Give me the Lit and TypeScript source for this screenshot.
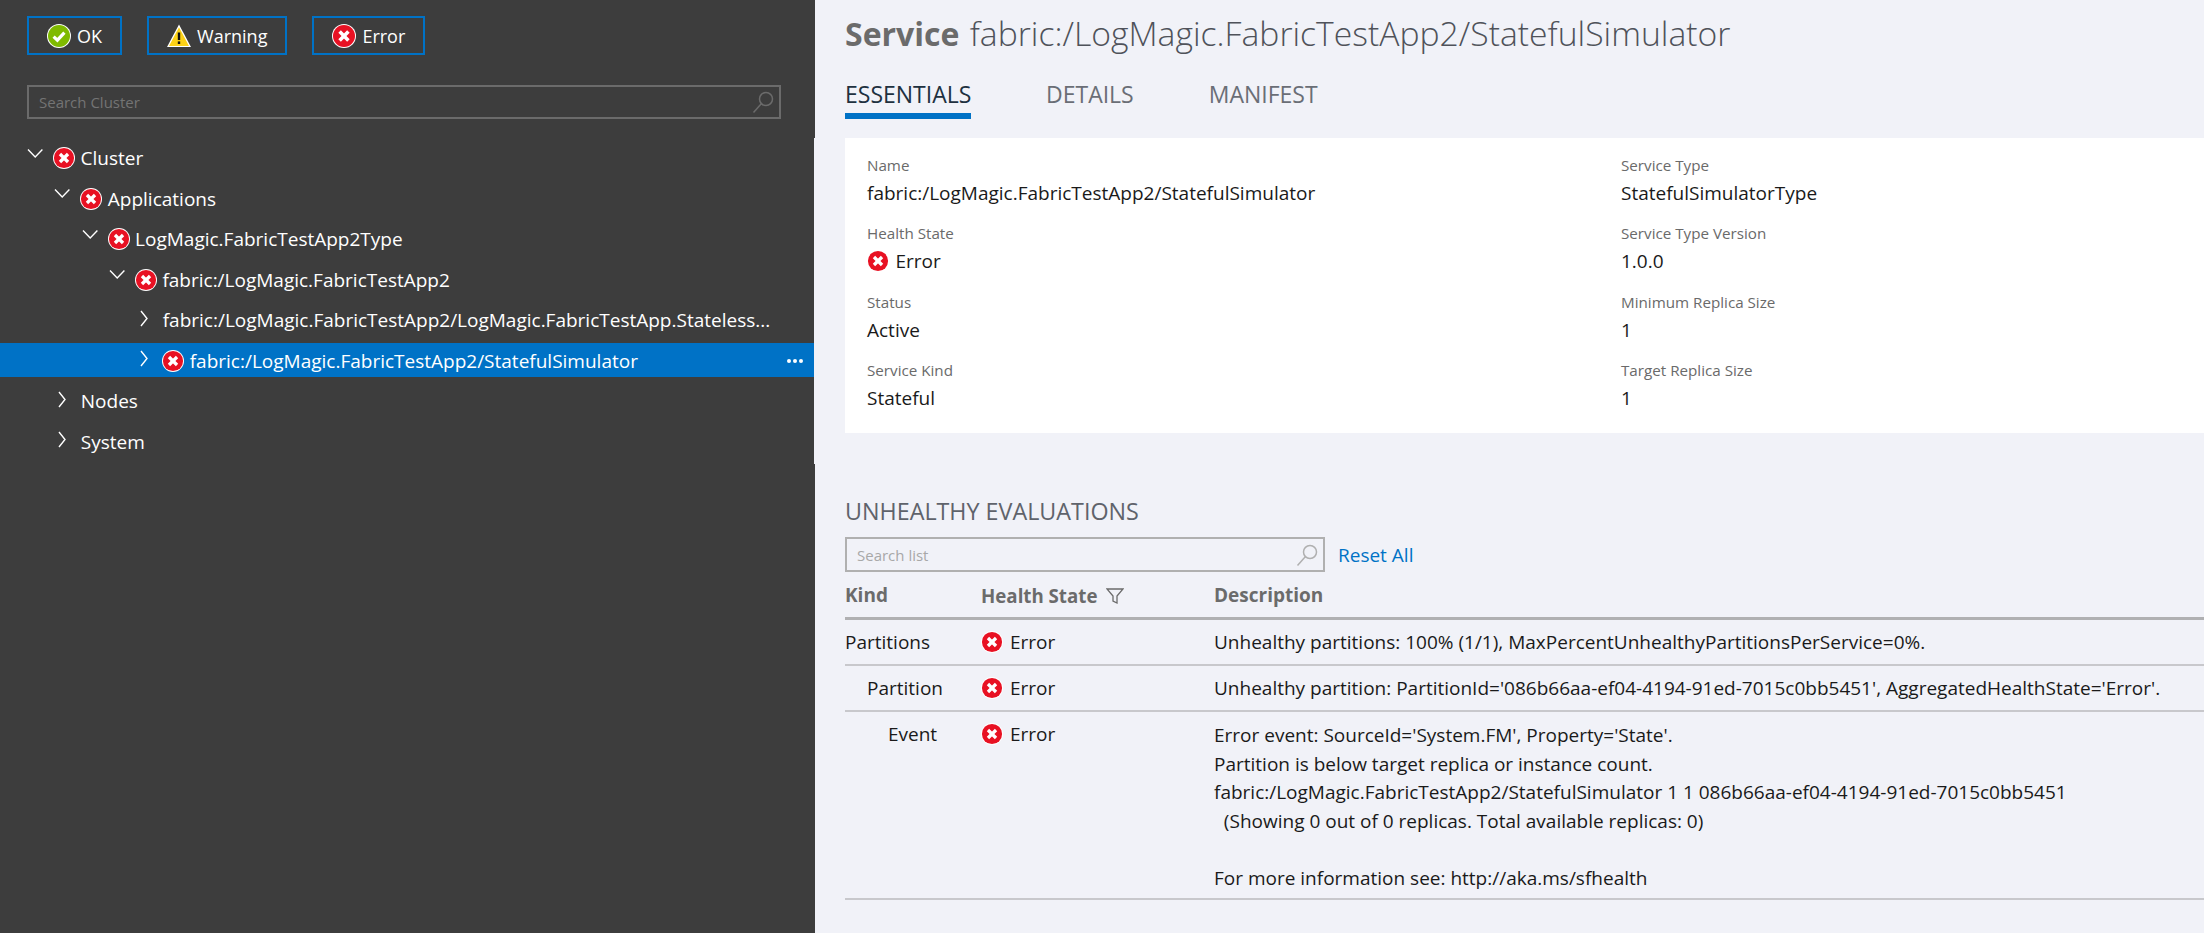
import { LitElement, html, css, svg } from "lit";
import { customElement } from "lit/decorators.js";

const errIcon = (size = 22) => html`<svg class="ico" width=${size} height=${size} viewBox="0 0 24 24">
  <circle cx="12" cy="12" r="12" fill="#fff"/><circle cx="12" cy="12" r="11" fill="#e81123"/>
  <path d="M7.6 7.6l8.8 8.8M16.4 7.6l-8.8 8.8" stroke="#fff" stroke-width="3.6" fill="none"/></svg>`;
const okIcon = html`<svg class="ico" width="24" height="24" viewBox="0 0 24 24">
  <circle cx="12" cy="12" r="12" fill="#fff"/><circle cx="12" cy="12" r="11" fill="#7fba00"/>
  <path d="M6.6 12.6l3.8 3.6 7-7.6" stroke="#fff" stroke-width="3.2" fill="none"/></svg>`;
const warnIcon = html`<svg class="ico" width="24" height="24" viewBox="0 0 24 24">
  <path d="M12 .5L24 23H0z" fill="#fff"/><path d="M12 3.2L22 22H2z" fill="#fcd116"/>
  <path d="M12 8.5v7.5" stroke="#111" stroke-width="2.4"/><path d="M12 17.4v2.6" stroke="#111" stroke-width="2.4"/></svg>`;
const searchIcon = (c: string) => html`<svg class="sicon" width="24" height="24" viewBox="0 0 24 24" fill="none" stroke=${c} stroke-width="1.5">
  <circle cx="15" cy="9" r="6.5"/><path d="M10.5 13.5L2.5 22.5"/></svg>`;
const chevDown = svg`<path d="M1 1.5l7.2 7.5 7.2-7.5" stroke="#fff" stroke-width="1.4" fill="none"/>`;
const chevRight = svg`<path d="M5 1l6 7.5-6 7.5" stroke="#fff" stroke-width="1.4" fill="none"/>`;

type Node = { d: number; open?: boolean; err?: boolean; t: string; sel?: boolean };
const tree: Node[] = [
  { d: 0, open: true, err: true, t: "Cluster" },
  { d: 1, open: true, err: true, t: "Applications" },
  { d: 2, open: true, err: true, t: "LogMagic.FabricTestApp2Type" },
  { d: 3, open: true, err: true, t: "fabric:/LogMagic.FabricTestApp2" },
  { d: 4, t: "fabric:/LogMagic.FabricTestApp2/LogMagic.FabricTestApp.Stateless..." },
  { d: 4, err: true, sel: true, t: "fabric:/LogMagic.FabricTestApp2/StatefulSimulator" },
  { d: 1, t: "Nodes" },
  { d: 1, t: "System" },
];

const left = [
  ["Name", "fabric:/LogMagic.FabricTestApp2/StatefulSimulator"],
  ["Health State", null],
  ["Status", "Active"],
  ["Service Kind", "Stateful"],
];
const right = [
  ["Service Type", "StatefulSimulatorType"],
  ["Service Type Version", "1.0.0"],
  ["Minimum Replica Size", "1"],
  ["Target Replica Size", "1"],
];

@customElement("app-root")
export class AppRoot extends LitElement {
  static styles = css`
    :host { display: block; height: 933px; font-family: "Open Sans", "Noto Sans", sans-serif; font-size: 19px; color: #1a1a1a; }
    * { box-sizing: border-box; }
    .ico { flex: none; display: block; }
    .app { display: grid; grid-template-columns: 815px 1fr; height: 933px; overflow: hidden; position: relative; }
    .side { background: #3d3d3d; color: #fff; padding-top: 16px; }
    .sliver { position: absolute; left: 814px; top: 138px; width: 1px; height: 326px; background: #f1f2f8; }
    .btns { display: flex; gap: 25px; padding-left: 27px; }
    .btn { height: 39px; border: 2px solid #0072c6; display: flex; align-items: center; gap: 6px; padding: 0 18px; font-size: 18px; }
    .sbox { display: flex; align-items: center; justify-content: space-between; border: 2px solid; height: 34px; }
    .side .sbox { margin: 30px 34px 0 27px; border-color: #6b6b6b; padding: 0 4px 0 10px; font-size: 15px; color: #747474; }
    .sicon { flex: none; }
    .tree { margin-top: 21px; display: flex; flex-direction: column; gap: 6.5px; }
    .row { display: flex; align-items: center; height: 34px; padding-top: 2px; padding-right: 14px; position: relative; }
    .row.sel { background: #0072c6; }
    .chev { flex: none; width: 19px; height: 17px; margin-top: -4px; display: block; }
    .row .ico { margin-left: 7px; }
    .row .lbl { margin-left: 5.5px; white-space: nowrap; }
    .row .lbl.plain { margin-left: 7.5px; }
    .dots { position: absolute; left: 787px; top: 16px; display: flex; gap: 2px; }
    .dots i { width: 4px; height: 4px; border-radius: 50%; background: #fff; }
    .main { background: #f1f2f8; padding-top: 10px; min-width: 0; }
    h1 { margin: 0 0 0 30px; height: 46px; font-size: 32px; font-weight: 400; line-height: 46px; color: #4f525a; white-space: nowrap; }
    h1 b { font-weight: 700; color: #6b6b6b; margin-right: 2px; }
    h1 span { font-size: 33.7px; font-weight: 300; }
    .tabs { display: flex; margin: 19px 0 0 30px; gap: 75px; }
    .tab { height: 44px; font-size: 23px; line-height: 38px; color: #6a6e76; white-space: nowrap; }
    .tab.on { color: #20303f; border-bottom: 6px solid #0072c6; width: 126px; }
    .card { margin: 19px 0 0 30px; height: 295px; background: #fff; padding: 15px 22px 0; display: grid; grid-template-columns: 754px 1fr; }
    .f { height: 68.3px; }
    .f .k { font-size: 15.2px; line-height: 24px; color: #6a6a6a; }
    .f .v { line-height: 32px; display: flex; align-items: center; gap: 6.5px; height: 32px; }
    h2 { margin: 63px 0 0 30px; font-size: 23.3px; font-weight: 400; line-height: 30px; color: #5f636b; }
    .filter { display: flex; align-items: center; margin: 11px 0 0 30px; gap: 13px; }
    .filter .sbox { width: 480px; height: 35px; border-color: #b0b0b0; padding: 0 4px 0 10px; font-size: 15px; color: #a8a8a8; }
    .reset { color: #0072c6; }
    .thead, .tr { display: grid; grid-template-columns: 136px 233px 1fr; margin-left: 30px; }
    .thead { height: 48px; border-bottom: 3px solid #b0b0b2; font-weight: 700; color: #6b6b6b; line-height: 47px; }
    .hs { display: flex; align-items: center; gap: 9px; height: 47px; font-size: 18.7px; }
    .tr { border-bottom: 2px solid #c8c8cc; height: 46px; line-height: 44px; }
    .tr.big { height: 188px; }
    .state { display: flex; align-items: center; gap: 7px; height: 44px; }
    .desc { white-space: pre; }
    .big .desc { line-height: 28.6px; padding-top: 9px; }
  `;

  private field(k: string, v: string | null) {
    return html`<div class="f"><div class="k">${k}</div><div class="v">${v ?? html`${errIcon()}<span>Error</span>`}</div></div>`;
  }

  private treeRow(n: Node) {
    return html`<div class="row ${n.sel ? "sel" : ""}" style="padding-left:${27 + 27.3 * n.d}px">
      <svg class="chev" viewBox="0 0 19 17">${n.open ? chevDown : chevRight}</svg>
      ${n.err ? errIcon() : ""}
      <span class="lbl ${n.err ? "" : "plain"}">${n.t}</span>
      ${n.sel ? html`<span class="dots"><i></i><i></i><i></i></span>` : ""}
    </div>`;
  }

  private tr(kind: string, indent: number, desc: string, big = false) {
    return html`<div class="tr ${big ? "big" : ""}">
      <div style="padding-left:${indent}px">${kind}</div>
      <div class="state">${errIcon()}<span>Error</span></div>
      <div class="desc">${desc}</div>
    </div>`;
  }

  render() {
    return html`<div class="app">
      <aside class="side">
        <div class="btns">
          <div class="btn">${okIcon}<span>OK</span></div>
          <div class="btn">${warnIcon}<span>Warning</span></div>
          <div class="btn">${errIcon(24)}<span>Error</span></div>
        </div>
        <div class="sbox"><span>Search Cluster</span>${searchIcon("#6b6b6b")}</div>
        <div class="tree">${tree.map((n) => this.treeRow(n))}</div>
      </aside>
      <div class="sliver"></div>
      <main class="main">
        <h1><b>Service</b> <span>fabric:/LogMagic.FabricTestApp2/StatefulSimulator</span></h1>
        <div class="tabs">
          <div class="tab on">ESSENTIALS</div>
          <div class="tab">DETAILS</div>
          <div class="tab">MANIFEST</div>
        </div>
        <section class="card">
          <div>${left.map(([k, v]) => this.field(k as string, v))}</div>
          <div>${right.map(([k, v]) => this.field(k as string, v))}</div>
        </section>
        <h2>UNHEALTHY EVALUATIONS</h2>
        <div class="filter">
          <div class="sbox"><span>Search list</span>${searchIcon("#b0b0b0")}</div>
          <span class="reset">Reset All</span>
        </div>
        <div class="thead">
          <div>Kind</div>
          <div class="hs"><span>Health State</span>
            <svg width="18" height="18" viewBox="0 0 18 18" fill="none" stroke="#6b6b6b" stroke-width="1.3"><path d="M1 2h16l-6 7v7l-4-2V9z"/></svg></div>
          <div>Description</div>
        </div>
        ${this.tr("Partitions", 0, "Unhealthy partitions: 100% (1/1), MaxPercentUnhealthyPartitionsPerService=0%.")}
        ${this.tr("Partition", 22, "Unhealthy partition: PartitionId='086b66aa-ef04-4194-91ed-7015c0bb5451', AggregatedHealthState='Error'.")}
        ${this.tr("Event", 43, `Error event: SourceId='System.FM', Property='State'.
Partition is below target replica or instance count.
fabric:/LogMagic.FabricTestApp2/StatefulSimulator 1 1 086b66aa-ef04-4194-91ed-7015c0bb5451
  (Showing 0 out of 0 replicas. Total available replicas: 0)

For more information see: http://aka.ms/sfhealth`, true)}
      </main>
    </div>`;
  }
}
